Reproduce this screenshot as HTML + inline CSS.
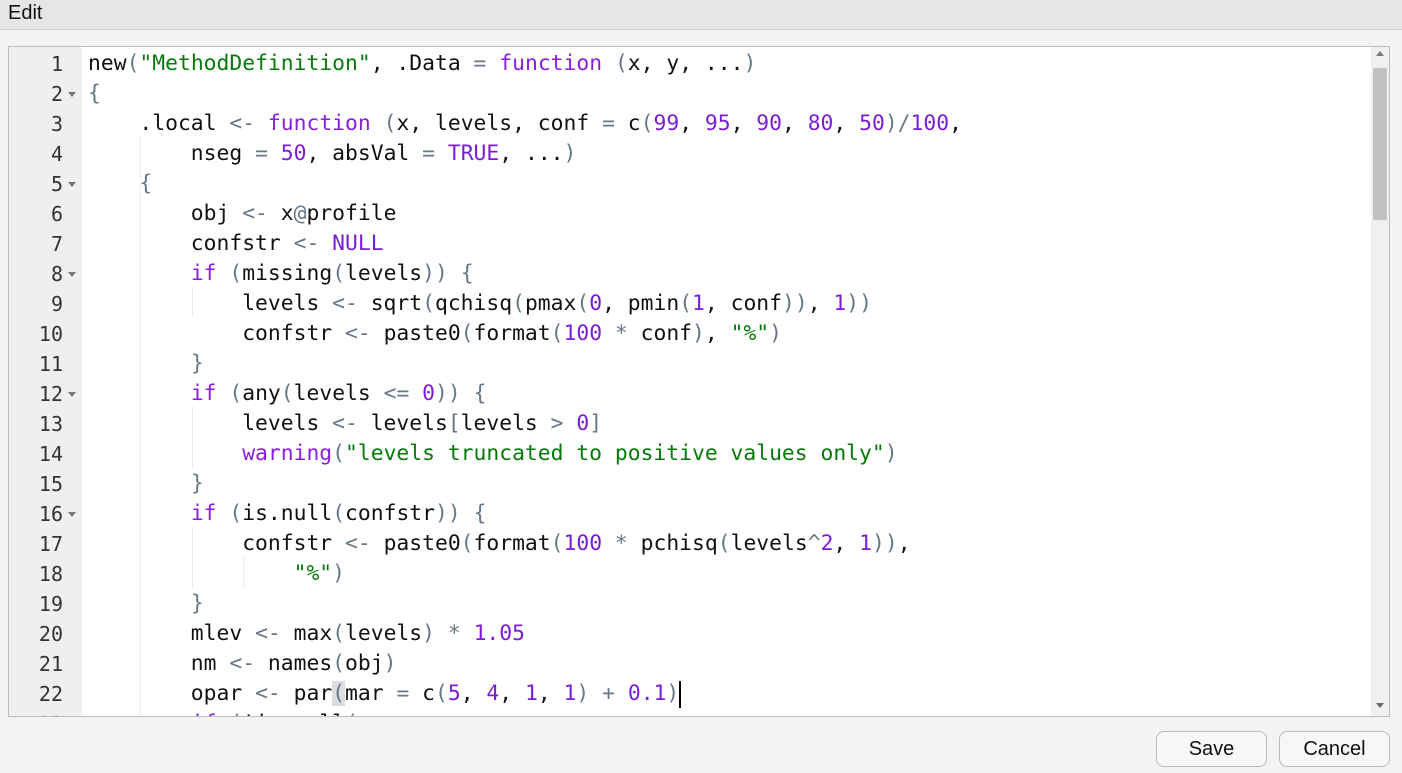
<!DOCTYPE html>
<html><head><meta charset="utf-8"><style>
*{margin:0;padding:0;box-sizing:border-box}
body{width:1402px;height:773px;background:#f2f3f2;position:relative;overflow:hidden;font-family:"Liberation Sans","DejaVu Sans",sans-serif}
#title{position:absolute;left:0;top:0;width:1402px;height:30px;background:#e6e6e6;border-bottom:1px solid #d4d4d4;font-size:20px;line-height:27px;padding-left:8px;color:#111}
#ed{position:absolute;left:8px;top:46px;width:1382px;height:671px;border:1px solid #bdbdbd;background:#fff;overflow:hidden}
#gut{position:absolute;left:0;top:0;width:73px;height:100%;background:#efefef}
.ln{position:absolute;left:0;width:54px;text-align:right;font-family:"DejaVu Sans Mono",monospace;font-size:20px;color:#333;height:30px;line-height:30px}
.fold{position:absolute;left:59px;width:0;height:0;border-left:4px solid transparent;border-right:4px solid transparent;border-top:5px solid #777}
.cl{position:absolute;left:79px;white-space:pre;font-family:"DejaVu Sans Mono",monospace;font-size:21.35px;height:30px;line-height:30px;color:#111;letter-spacing:0}
.o{color:#687687}.s{color:#067a0a}.n{color:#7c1dd6}.k{color:#8a1ee0}
.g{position:absolute;width:0;border-left:1px dotted #ddd}
#sb{position:absolute;right:0;top:0;width:18px;height:100%;background:#f0f0f0}
#th{position:absolute;left:2px;top:21px;width:14px;height:152px;background:#c1c1c1;border-radius:1px}
.btn{position:absolute;top:731px;height:36px;border:1px solid #bbb;border-radius:8px;background:#f7f7f7;font-size:20px;line-height:34px;text-align:center;color:#111}
</style></head><body>
<div id="title">Edit</div>
<div id="ed">
<div id="gut"></div>
<div class="g" style="left:131px;top:90px;height:600px"></div>
<div class="g" style="left:183px;top:240px;height:30px"></div>
<div class="g" style="left:183px;top:360px;height:60px"></div>
<div class="g" style="left:183px;top:480px;height:60px"></div>
<div class="g" style="left:234px;top:510px;height:30px"></div>
<div id="lines"></div>
<div id="sb"><div id="th"></div>
<div style="position:absolute;left:5px;top:4px;border-left:4px solid transparent;border-right:4px solid transparent;border-bottom:5px solid #777"></div>
<div style="position:absolute;left:5px;bottom:8px;border-left:4px solid transparent;border-right:4px solid transparent;border-top:5px solid #666"></div>
</div>
</div>
<div class="btn" style="left:1156px;width:111px">Save</div>
<div class="btn" style="left:1279px;width:111px">Cancel</div>
<script>
var L=[
'new<o>(</o><s>"MethodDefinition"</s>, .Data <o>=</o> <k>function</k> <o>(</o>x, y, ...<o>)</o>',
'<o>{</o>',
'    .local <o>&lt;-</o> <k>function</k> <o>(</o>x, levels, conf <o>=</o> c<o>(</o><n>99</n>, <n>95</n>, <n>90</n>, <n>80</n>, <n>50</n><o>)</o><o>/</o><n>100</n>,',
'        nseg <o>=</o> <n>50</n>, absVal <o>=</o> <n>TRUE</n>, ...<o>)</o>',
'    <o>{</o>',
'        obj <o>&lt;-</o> x<o>@</o>profile',
'        confstr <o>&lt;-</o> <n>NULL</n>',
'        <k>if</k> <o>(</o>missing<o>(</o>levels<o>))</o> <o>{</o>',
'            levels <o>&lt;-</o> sqrt<o>(</o>qchisq<o>(</o>pmax<o>(</o><n>0</n>, pmin<o>(</o><n>1</n>, conf<o>))</o>, <n>1</n><o>))</o>',
'            confstr <o>&lt;-</o> paste0<o>(</o>format<o>(</o><n>100</n> <o>*</o> conf<o>)</o>, <s>"%"</s><o>)</o>',
'        <o>}</o>',
'        <k>if</k> <o>(</o>any<o>(</o>levels <o>&lt;=</o> <n>0</n><o>))</o> <o>{</o>',
'            levels <o>&lt;-</o> levels<o>[</o>levels <o>&gt;</o> <n>0</n><o>]</o>',
'            <k>warning</k><o>(</o><s>"levels truncated to positive values only"</s><o>)</o>',
'        <o>}</o>',
'        <k>if</k> <o>(</o>is.null<o>(</o>confstr<o>))</o> <o>{</o>',
'            confstr <o>&lt;-</o> paste0<o>(</o>format<o>(</o><n>100</n> <o>*</o> pchisq<o>(</o>levels<o>^</o><n>2</n>, <n>1</n><o>))</o>,',
'                <s>"%"</s><o>)</o>',
'        <o>}</o>',
'        mlev <o>&lt;-</o> max<o>(</o>levels<o>)</o> <o>*</o> <n>1.05</n>',
'        nm <o>&lt;-</o> names<o>(</o>obj<o>)</o>',
'        opar <o>&lt;-</o> par<o style="background:#ddd">(</o>mar <o>=</o> c<o>(</o><n>5</n>, <n>4</n>, <n>1</n>, <n>1</n><o>)</o> <o>+</o> <n>0.1</n><o>)</o><span style="display:inline-block;width:2px;height:27px;background:#000;vertical-align:middle"></span>',
'        <k>if</k> <o>(</o>!is.null<o>(</o>'
];
var folds=[2,5,8,12,16];
var h='';
L.forEach(function(c,i){
 var t=2+30*i;
 c=c.replace(/<(o|s|n|k)([^>]*)>/g,'<span class="$1"$2>').replace(/<\/(o|s|n|k)>/g,'</span>');
 h+='<div class="ln" style="top:'+t+'px">'+(i+1)+'</div>';
 if(folds.indexOf(i+1)>=0)h+='<div class="fold" style="top:'+(t+13)+'px"></div>';
 h+='<div class="cl" style="top:'+t+'px">'+c+'</div>';
});
document.getElementById('lines').innerHTML=h;
</script>
</body></html>
